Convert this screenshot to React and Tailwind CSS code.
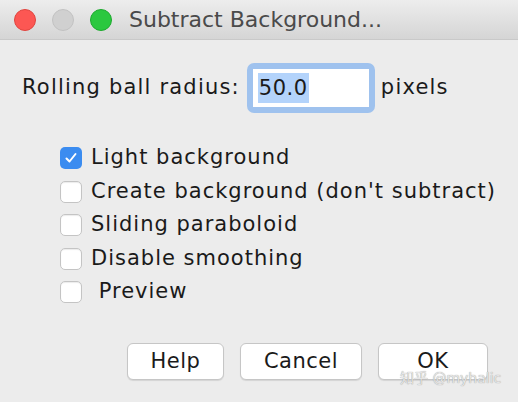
import React from 'react';

const font = { fontFamily: '"DejaVu Sans", "Noto Sans CJK SC", sans-serif' };

const options = [
  { label: 'Light background', checked: true },
  { label: 'Create background (don\'t subtract)', checked: false },
  { label: 'Sliding paraboloid', checked: false },
  { label: 'Disable smoothing', checked: false },
  { label: '\u00a0Preview', checked: false },
];

const Check = ({ checked }) =>
  checked ? (
    <span className="flex h-[22px] w-[22px] shrink-0 items-center justify-center rounded-[5px] bg-[#3b8cf0]">
      <svg width="14" height="14" viewBox="0 0 14 14" fill="none">
        <path d="M2.5 7.5 L5.5 10.5 L11.5 3" stroke="white" strokeWidth="2" strokeLinecap="round" strokeLinejoin="round" />
      </svg>
    </span>
  ) : (
    <span className="h-[22px] w-[22px] shrink-0 rounded-[5px] border border-[#c4c4c4] bg-white shadow-[inset_0_1px_1px_rgba(0,0,0,0.08)]" />
  );

export default function App() {
  return (
    <div className="relative h-[402px] w-[518px] overflow-hidden bg-[#ececec] text-[#1a1a1a]" style={font}>
      <div className="flex h-[40px] items-center border-b border-[#c9c9c9] bg-gradient-to-b from-[#ededed] to-[#d5d5d5] pl-[14px]">
        <div className="flex gap-[16px]">
          <span className="h-[22px] w-[22px] rounded-full bg-[#fc5753] border border-[#e0443e]" />
          <span className="h-[22px] w-[22px] rounded-full bg-[#d0d0d0] border border-[#c2c2c2]" />
          <span className="h-[22px] w-[22px] rounded-full bg-[#2bc83f] border border-[#1eaa2f]" />
        </div>
        <span className="ml-[17px] text-[22px] text-[#4a4a4a] whitespace-nowrap">Subtract Background...</span>
      </div>

      <div className="flex items-center pl-[22px] pt-[23px] text-[21px] tracking-[1.2px]">
        <span className="whitespace-nowrap">Rolling ball radius:</span>
        <div className="ml-[7px] rounded-[7px] bg-[#9fc2ee] p-[6px]">
          <div className="flex h-[38px] w-[116px] items-center bg-white pl-[5px]">
            <span className="bg-[#b3d3fb] px-[1px] text-[21px] leading-[30px] tracking-[0.5px]">50.0</span>
          </div>
        </div>
        <span className="ml-[6px]">pixels</span>
      </div>

      <div className="flex flex-col gap-[11.5px] pl-[60px] pt-[34px]">
        {options.map((o) => (
          <label key={o.label} className="flex h-[22px] items-center gap-[9px]">
            <Check checked={o.checked} />
            <span className="text-[21px] tracking-[1px] whitespace-pre">{o.label}</span>
          </label>
        ))}
      </div>

      <div className="flex gap-[16px] pl-[127px] pt-[40px]">
        {[['Help', 'w-[97px]'], ['Cancel', 'w-[122px]'], ['OK', 'w-[110px]']].map(([t, w]) => (
          <button key={t} className={`${w} h-[37px] rounded-[6px] border border-[#c6c6c6] bg-white text-[21px] tracking-[0.5px] shadow-[0_1px_1px_rgba(0,0,0,0.1)]`}>
            {t}
          </button>
        ))}
      </div>

      <span className="absolute left-[400px] top-[368px] whitespace-nowrap text-[14px] text-[#e6e6e6] [text-shadow:0_0_1px_#888]">知乎 @myhalic</span>
    </div>
  );
}
